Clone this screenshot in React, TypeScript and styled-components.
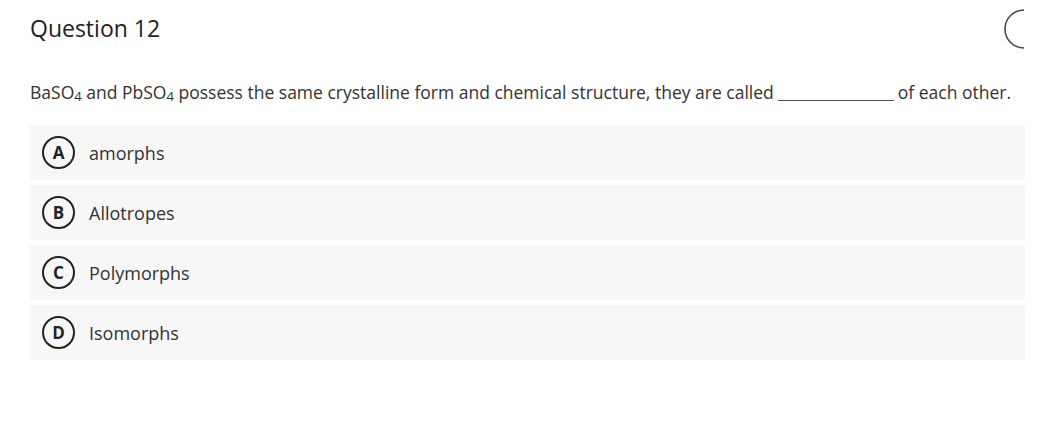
import React from "react";
import styled, { createGlobalStyle } from "styled-components";

const GlobalStyle = createGlobalStyle`
  html, body {
    margin: 0;
    padding: 0;
    background: #fff;
  }
  body {
    font-family: "Open Sans", "Noto Sans", sans-serif;
    color: #333;
  }
`;

const Page = styled.div`
  padding: 0 35px 0 30px;
`;

const Header = styled.header`
  display: flex;
  justify-content: space-between;
  align-items: flex-start;
  height: 60px;
`;

const Title = styled.h2`
  margin: 12px 0 0;
  font-size: 23px;
  font-weight: 400;
  color: #222;
`;

const Timer = styled.svg`
  margin-top: 9px;
`;

const Stem = styled.p`
  margin: 18px 0 19px;
  font-size: 17.5px;
  line-height: 28px;
  color: #333;

  sub {
    font-size: 0.75em;
    vertical-align: -2px;
    line-height: 0;
  }
`;

const Blank = styled.span`
  display: inline-block;
  width: 116px;
  border-bottom: 1px solid #555;
  margin: 0 4px 0 4px;
  transform: translateY(2px);
`;

const Options = styled.div`
  display: flex;
  flex-direction: column;
  gap: 5px;
`;

const Option = styled.div`
  display: flex;
  align-items: center;
  gap: 14px;
  height: 55px;
  padding-left: 12px;
  background: #f7f7f7;
  font-size: 18px;
  color: #333;
`;

const Letter = styled.span`
  display: flex;
  align-items: center;
  justify-content: center;
  width: 29px;
  height: 29px;
  border: 2px solid #222;
  border-radius: 50%;
  font-size: 17px;
  font-weight: 700;
  color: #222;
`;

const choices = [
  { key: "A", text: "amorphs" },
  { key: "B", text: "Allotropes" },
  { key: "C", text: "Polymorphs" },
  { key: "D", text: "Isomorphs" },
];

const App: React.FC = () => {
  return (
    <Page>
      <GlobalStyle />
      <Header>
        <Title>Question 12</Title>
        <Timer width="24" height="40" viewBox="0 0 24 40">
          <path
            d="M23 1 A19 19 0 0 0 23 39"
            fill="none"
            stroke="#444"
            strokeWidth="1.5"
          />
        </Timer>
      </Header>
      <Stem>
        BaSO<sub>4</sub> and PbSO<sub>4</sub> possess the same crystalline form
        and chemical structure, they are called
        <Blank />
        of each other.
      </Stem>
      <Options>
        {choices.map((c) => (
          <Option key={c.key}>
            <Letter>{c.key}</Letter>
            {c.text}
          </Option>
        ))}
      </Options>
    </Page>
  );
};

export default App;
